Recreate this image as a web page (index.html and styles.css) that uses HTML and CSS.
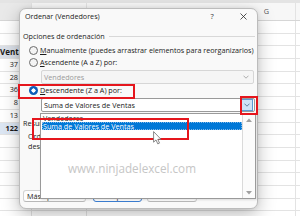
FILE: index.html
```html
<!DOCTYPE html>
<html lang="es">
<head>
<meta charset="utf-8">
<title>Ordenar (Vendedores)</title>
<link rel="stylesheet" href="styles.css">
</head>
<body>
<div class="sheet">
  <div class="sheet-strip"></div>
  <div class="row head"><div class="c-a"></div><div class="c-b"></div><div class="c-mid"></div><div class="c-g">G</div><div class="c-h"></div></div>
  <div class="row"><div class="c-a"></div><div class="c-b"></div><div class="c-mid"></div><div class="c-g"></div><div class="c-h"></div></div>
  <div class="row"><div class="c-a"></div><div class="c-b"></div><div class="c-mid"></div><div class="c-g"></div><div class="c-h"></div></div>
  <div class="row"><div class="c-a tbl-head">Ventas</div><div class="c-b"></div><div class="c-mid"></div><div class="c-g"></div><div class="c-h"></div></div>
  <div class="row"><div class="c-a">37</div><div class="c-b"></div><div class="c-mid"></div><div class="c-g"></div><div class="c-h"></div></div>
  <div class="row"><div class="c-a">28</div><div class="c-b"></div><div class="c-mid"></div><div class="c-g"></div><div class="c-h"></div></div>
  <div class="row"><div class="c-a">36</div><div class="c-b"></div><div class="c-mid"></div><div class="c-g"></div><div class="c-h"></div></div>
  <div class="row"><div class="c-a">8</div><div class="c-b"></div><div class="c-mid"></div><div class="c-g"></div><div class="c-h"></div></div>
  <div class="row"><div class="c-a">13</div><div class="c-b"></div><div class="c-mid"></div><div class="c-g"></div><div class="c-h"></div></div>
  <div class="row"><div class="c-a tbl-total">122</div><div class="c-b"></div><div class="c-mid"></div><div class="c-g"></div><div class="c-h"></div></div>
  <div class="row"><div class="c-a"></div><div class="c-b"></div><div class="c-mid"></div><div class="c-g"></div><div class="c-h"></div></div>
  <div class="row"><div class="c-a"></div><div class="c-b"></div><div class="c-mid"></div><div class="c-g"></div><div class="c-h"></div></div>
  <div class="row"><div class="c-a"></div><div class="c-b"></div><div class="c-mid"></div><div class="c-g"></div><div class="c-h"></div></div>
  <div class="row"><div class="c-a"></div><div class="c-b"></div><div class="c-mid"></div><div class="c-g"></div><div class="c-h"></div></div>
  <div class="row"><div class="c-a"></div><div class="c-b"></div><div class="c-mid"></div><div class="c-g"></div><div class="c-h"></div></div>
  <div class="row"><div class="c-a"></div><div class="c-b"></div><div class="c-mid"></div><div class="c-g"></div><div class="c-h"></div></div>
  <div class="row"><div class="c-a"></div><div class="c-b"></div><div class="c-mid"></div><div class="c-g"></div><div class="c-h"></div></div>
</div>

<div class="dialog">
  <div class="titlebar">
    <span class="title">Ordenar (Vendedores)</span>
    <span class="help">?</span>
    <span class="close"><svg width="7" height="7" viewBox="0 0 7 7"><path d="M0.5 0.5L6.5 6.5M6.5 0.5L0.5 6.5" stroke="#2b2b2b" stroke-width="0.8" fill="none"/></svg></span>
  </div>
  <div class="body">
    <div class="group-label"><span>Opciones de ordenación</span><span class="rule"></span></div>
    <div class="radio-row"><span class="radio"></span><span><u>M</u>anualmente (puedes arrastrar elementos para reorganizarlos)</span></div>
    <div class="radio-row"><span class="radio"></span><span><u>A</u>scendente (A a Z) por:</span></div>
    <div class="combo disabled"><span class="combo-text">Vendedores</span><svg class="chev" width="6" height="4" viewBox="0 0 6 4"><path d="M0.5 0.7L3 3.2L5.5 0.7" fill="none" stroke="#9a9a9a" stroke-width="0.8"/></svg></div>
    <div class="radio-row"><span class="radio checked"></span><span><u>D</u>escendente (Z a A) por:</span></div>
    <div class="combo active"><span class="combo-text">Suma de Valores de Ventas</span><span class="dropbtn"><svg width="6" height="4" viewBox="0 0 6 4"><path d="M0.5 0.7L3 3.2L5.5 0.7" fill="none" stroke="#4a6a8a" stroke-width="0.8"/></svg></span></div>
    <div class="summary">
      <div class="sum-label">Resumen</div>
      <div class="sum-text">Ordenar Vendedores por Suma de Valores de Ventas en orden</div>
      <div class="sum-text">descendente</div>
    </div>
  </div>
  <div class="footer">
    <span class="btn more">Más opciones...</span>
    <span class="btn primary">Aceptar</span>
    <span class="btn cancel">Cancelar</span>
  </div>

  <div class="listbox">
    <div class="items">
      <div class="item">Vendedores</div>
      <div class="item selected">Suma de Valores de Ventas</div>
    </div>
    <div class="scrollbar">
      <svg width="6" height="4" viewBox="0 0 6 4"><path d="M0 4L3 0.5L6 4Z" fill="#a0a0a0"/></svg>
      <svg width="6" height="4" viewBox="0 0 6 4"><path d="M0 0L3 3.5L6 0Z" fill="#a0a0a0"/></svg>
    </div>
  </div>
</div>

<div class="mark mark-radio"></div>
<div class="mark mark-btn"></div>
<div class="mark mark-item"></div>

<div class="watermark">www.ninjadelexcel.com</div>

<svg class="cursor" width="9" height="14" viewBox="0 0 9 14"><path d="M0.6 0.6L0.6 11.2L3 8.9L4.8 12.9L6.5 12.1L4.8 8.3L8 8.3Z" fill="#ffffff" stroke="#6a6a6a" stroke-width="0.8" stroke-linejoin="round"/></svg>
</body>
</html>
```

FILE: styles.css
```css
* { box-sizing: border-box; margin: 0; padding: 0; }

html, body {
  width: 300px;
  height: 216px;
  overflow: hidden;
}

body {
  position: relative;
  background: #ffffff;
  font-family: "Open Sans", "Noto Sans", sans-serif;
  color: #1b1b1b;
}

/* ---------- spreadsheet background ---------- */
.sheet {
  width: 300px;
  height: 216px;
  display: flex;
  flex-direction: column;
  overflow: hidden;
  background: #ffffff;
}

.sheet-strip {
  flex: none;
  height: 3px;
  background: #e4e4e4;
}

.row {
  flex: none;
  display: flex;
  height: 12.7px;
  border-bottom: 1px solid #e3e3e3;
  font-size: 7.3px;
  line-height: 11.7px;
}

.row.head {
  height: 18px;
  line-height: 17px;
  border-bottom: 1px solid #d6d6d6;
}

.c-a {
  flex: none;
  width: 32px;
  padding-right: 13px;
  text-align: right;
  white-space: nowrap;
  overflow: hidden;
  border-right: 1px solid #e3e3e3;
  color: #222;
}

.c-b {
  flex: none;
  width: 55px;
  border-right: 1px solid #e3e3e3;
}

.c-mid {
  flex: none;
  width: 151px;
}

.c-g {
  flex: none;
  width: 58px;
  border-right: 1px solid #e3e3e3;
  text-align: center;
  color: #555;
}

.c-h { flex: 1; }

.row.head .c-a { background: #e9e9e9; }
.row.head .c-b,
.row.head .c-mid,
.row.head .c-g,
.row.head .c-h { background: #f7f7f7; }

.tbl-head {
  text-align: left;
  padding: 0;
  font-weight: 700;
  font-size: 8px;
  background: #dbe0e8;
  color: #1a1a1a;
}

.tbl-total {
  font-weight: 700;
  background: #dce6f3;
  color: #1a1a1a;
}

/* ---------- dialog ---------- */
.dialog {
  position: absolute;
  left: 19px;
  top: 8px;
  width: 239px;
  height: 201px;
  display: flex;
  flex-direction: column;
  background: #f9f9f9;
  border: 1px solid #bcbcbc;
  border-radius: 7px;
  box-shadow: 0 6px 18px rgba(0, 0, 0, 0.26), 0 0 4px rgba(0, 0, 0, 0.08);
  font-size: 7.2px;
  color: #1b1b1b;
}

.titlebar {
  flex: none;
  height: 14px;
  display: flex;
  align-items: center;
  padding-left: 5px;
}

.title {
  flex: 1;
  white-space: nowrap;
}

.help {
  width: 10px;
  text-align: center;
  font-size: 7.5px;
  color: #333;
}

.close {
  display: flex;
  margin-left: 23px;
  margin-right: 10px;
}

.body {
  flex: none;
  display: flex;
  flex-direction: column;
  padding-left: 3px;
}

.group-label {
  display: flex;
  align-items: center;
  height: 10px;
  margin-top: 8px;
  white-space: nowrap;
}

.group-label .rule {
  flex: 1;
  height: 1px;
  background: #d8d8d8;
  margin-left: 4px;
  margin-right: 2px;
}

.radio-row {
  display: flex;
  align-items: center;
  height: 12px;
  white-space: nowrap;
}

.radio-row:nth-of-type(2) { margin-top: 3px; }

.radio {
  flex: none;
  width: 9px;
  height: 9px;
  margin-left: 6px;
  margin-right: 2px;
  border: 1px solid #6b6b6b;
  border-radius: 50%;
  background: #f4f4f4;
}

.radio.checked {
  border: none;
  background: radial-gradient(circle, #ffffff 0 1.9px, #0f5cb8 2.3px);
}

u { text-decoration: underline; text-underline-offset: 1px; }

.combo {
  display: flex;
  align-items: center;
  height: 14px;
  margin: 2px 3px 0 18px;
  border: 1px solid #c9c9c9;
  border-radius: 2px;
  padding-left: 2px;
  white-space: nowrap;
}

.combo.disabled {
  color: #9b9b9b;
  background: #f5f5f5;
  border-color: #d6d6d6;
}

.combo-text { flex: 1; }

.combo .chev { margin-right: 4px; }

.combo.active {
  margin-right: 2px;
  background: #ffffff;
  border-color: #9a9a9a;
  padding-right: 1px;
}

.dropbtn {
  display: flex;
  align-items: center;
  justify-content: center;
  width: 12px;
  height: 12px;
  background: #cfe4f7;
  border: 1px solid #5b9bd5;
}

.summary {
  margin-top: 6px;
}

.sum-label {
  line-height: 10px;
  margin-bottom: 3px;
}

.sum-text {
  line-height: 10px;
  padding-left: 5px;
  white-space: nowrap;
}

.footer {
  margin-top: auto;
  display: flex;
  padding: 0 0 6px 3px;
}

.btn {
  height: 12px;
  display: flex;
  align-items: center;
  justify-content: center;
  background: #fdfdfd;
  border: 1px solid #d2d2d2;
  border-bottom-color: #b8b8b8;
  border-radius: 3px;
  white-space: nowrap;
  overflow: hidden;
}

.btn.more { width: 63px; justify-content: flex-start; padding-left: 3px; }
.btn.primary { width: 49px; margin-left: 7px; border-color: #3b7dd0; }
.btn.cancel { width: 50px; margin-left: 5px; }

/* dropdown list (popup over the dialog) */
.listbox {
  position: absolute;
  left: 20px;
  top: 104px;
  width: 216px;
  height: 86px;
  display: flex;
  background: #ffffff;
  border: 1px solid #9a9a9a;
  box-shadow: 1px 1px 2px rgba(0, 0, 0, 0.12);
}

.items {
  flex: 1;
  padding: 0 0 0 1px;
}

.item {
  height: 8px;
  line-height: 8px;
  padding-left: 1px;
  white-space: nowrap;
}

.item.selected {
  background: #0078d7;
  color: #ffffff;
  outline: 1px dotted #7fb6e6;
  outline-offset: -1px;
}

.scrollbar {
  flex: none;
  width: 13px;
  border-left: 1px solid #dadada;
  background: #fbfbfb;
  display: flex;
  flex-direction: column;
  align-items: center;
  justify-content: space-between;
  padding: 4px 0 3px;
}

/* red annotations */
.mark {
  position: absolute;
  border: 2px solid #e5161d;
}

.mark-radio { left: 18px; top: 84px; width: 117px; height: 15px; }
.mark-btn { left: 240px; top: 96px; width: 18px; height: 19px; }
.mark-item { left: 32px; top: 118px; width: 157px; height: 22px; }

.watermark {
  position: absolute;
  left: 68px;
  top: 161px;
  font-size: 11.7px;
  line-height: 14px;
  color: #c6c6c6;
  white-space: nowrap;
}

.cursor {
  position: absolute;
  left: 153px;
  top: 131px;
}
```
